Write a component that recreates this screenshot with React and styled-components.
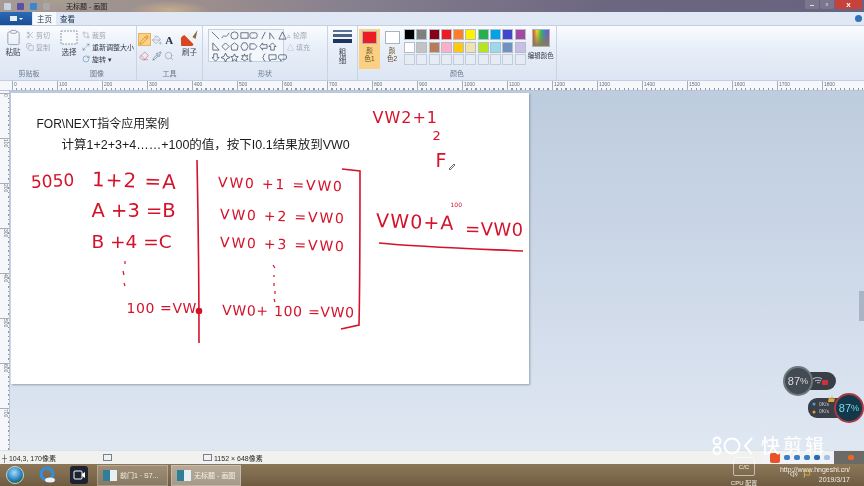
import React from "react";
import styled, { createGlobalStyle } from "styled-components";
import { Clipboard, Scissors, Copy, Maximize2, RotateCw, Pencil, PaintBucket, Eraser, Pipette, Search, Crop, Volume2, Flag } from "lucide-react";

const PALETTE = [
	"#000000", "#7f7f7f", "#880015", "#ed1c24", "#ff7f27", "#fff200", "#22b14c", "#00a2e8", "#3f48cc", "#a349a4",
	"#ffffff", "#c3c3c3", "#b97a57", "#ffaec9", "#ffc90e", "#efe4b0", "#b5e61d", "#99d9ea", "#7092be", "#c8bfe7",
	"none", "none", "none", "none", "none", "none", "none", "none", "none", "none",
];

const RULER_TOP = Array.from({ length: 19 }, (_, i) => i * 100);
const RULER_LEFT = Array.from({ length: 8 }, (_, i) => i * 100);

const SHAPES = [
	<path d="M1 1l8 8" />, <path d="M1 8c2-6 4 2 8-6" />, <circle cx="5" cy="5" r="4" />, <rect x="1" y="2" width="8" height="6" />,
	<rect x="1" y="2" width="8" height="6" rx="2" />, <path d="M3 9L7 1" />, <path d="M2 9V2l5 7" />, <path d="M5 1l4 8H1z" />,
	<path d="M2 1v8h7z" />, <path d="M5 1l4 4-4 4-4-4z" />, <path d="M5 1l4 3-1 5H2L1 4z" />, <path d="M3 1h4l2 4-2 4H3L1 5z" />,
	<path d="M1 2h5l3 3-3 3H1z" />, <path d="M9 3H4V1L1 5l3 4V7h5z" />, <path d="M5 1l4 4H7v4H3V5H1z" />, null,
	<path d="M3 1h4v4h2L5 9 1 5h2z" />, <path d="M5 0l1.500 3.500L10 5 6.500 6.500 5 10 3.500 6.500 0 5l3.500-1.500z" />, <path d="M5 1l1.200 2.800 3 .3-2.300 2 .7 3L5 7.500 2.400 9l.7-3-2.300-2 3-.3z" />, <path d="M5 1l1 2.500 2.500-1-1 2.500 1.500 2-2.500.5L5 9 4 7.500l-2.500-.5 1.500-2-1-2.500 2.500 1z" />,
	<path d="M3 1H1v8h2" />, <path d="M7 1c-3 0-1 4-3 4 2 0 0 4 3 4" />, <path d="M1 2h8v5H4L2 9V7H1z" />, <path d="M2 2h6c2 0 2 5 0 5H5L3 9V7H2C0 7 0 2 2 2z" />,
];

const HAND_LEFT = [
	{ text: "5050", x: 20, y: 81, size: 17, space: 0, tilt: -3 },
	{ text: "1+2 =A", x: 81, y: 76, size: 20, space: 1, tilt: 2 },
	{ text: "A +3 =B", x: 81, y: 108, size: 19.500, space: 0, tilt: 0 },
	{ text: "B +4 =C", x: 81, y: 140, size: 18.500, space: 0, tilt: 0 },
	{ text: "100 =VW", x: 116, y: 208, size: 14, space: 0.6, tilt: 0 },
	{ text: "VW0 +1 =VW0", x: 207, y: 82, size: 14, space: 1.8, tilt: 2 },
	{ text: "VW0 +2 =VW0", x: 209, y: 114, size: 14, space: 1.800, tilt: 2 },
	{ text: "VW0 +3 =VW0", x: 209, y: 142, size: 14, space: 1.800, tilt: 2 },
	{ text: "VW0+ 100 =VW0", x: 211, y: 210, size: 14, space: 0.7, tilt: 1 },
	{ text: "VW2+1", x: 362, y: 17, size: 16, space: 1, tilt: 0 },
	{ text: "2", x: 422, y: 36, size: 13, space: 0, tilt: 0 },
	{ text: "F", x: 425, y: 58, size: 19, space: 0, tilt: 0 },
	{ text: "VW0+A", x: 365, y: 118, size: 19, space: 1.2, tilt: 2 },
	{ text: "=VW0", x: 454, y: 127, size: 18, space: 0.5, tilt: 1 },
	{ text: "100", x: 440, y: 109, size: 6, space: 0, tilt: 0 },
];

const GlobalStyle = createGlobalStyle`
	html, body {
		margin: 0;
		padding: 0;
		width: 864px;
		height: 486px;
		overflow: hidden;
	}
	body {
		font-family: "Liberation Sans", "Noto Sans CJK SC", sans-serif;
	}
`;

const Screen = styled.div`
	position: relative;
	display: flex;
	flex-direction: column;
	width: 864px;
	height: 486px;
	overflow: hidden;
	background: #c9d5e6;
	filter: blur(0.35px);
`;

const TitleBar = styled.div`
	height: 12px;
	display: flex;
	align-items: center;
	padding-left: 4px;
	gap: 6px;
	background:
		radial-gradient(ellipse 40px 9px at 170px 10px, #c6ab8c 0%, rgba(198, 171, 140, 0) 100%),
		radial-gradient(ellipse 30px 9px at 60px 0, #a8a08f 0%, rgba(168, 160, 143, 0) 100%),
		linear-gradient(90deg, #a59a95 0%, #9a8d8c 25%, #87808f 40%, #6d6680 70%, #68637f 100%);
`;

const QuickIcon = styled.span`
	width: 7px;
	height: 7px;
	border-radius: 1px;
	background: ${(p) => p.$color};
`;

const TitleText = styled.span`
	margin-left: 10px;
	font-size: 7px;
	color: #1b1b1b;
`;

const WinButtons = styled.div`
	margin-left: auto;
	margin-right: 2px;
	display: flex;
	gap: 1px;
	height: 9px;
	align-self: flex-start;
`;

const WinButton = styled.span`
	width: ${(p) => (p.$close ? "27px" : "14px")};
	height: 9px;
	display: flex;
	align-items: center;
	justify-content: center;
	color: #fff;
	font-size: 8px;
	font-weight: 700;
	border-radius: 0 0 2px 2px;
	background: ${(p) => (p.$close ? "#c8423c" : "rgba(255,255,255,0.12)")};
`;

const TabRow = styled.div`
	height: 13px;
	display: flex;
	align-items: stretch;
	background: #dfe8f4;
	border-bottom: 1px solid #c5d0df;
`;

const FileTab = styled.div`
	width: 32px;
	display: flex;
	align-items: center;
	justify-content: center;
	gap: 2px;
	background: linear-gradient(#2a6bb5, #1a4f95);
`;

const FileGlyph = styled.span`
	width: 7px;
	height: 5px;
	background: #e8eef8;
`;

const FileArrow = styled.span`
	width: 0;
	height: 0;
	border: 2px solid transparent;
	border-top-color: #fff;
	margin-top: 2px;
`;

const Tab = styled.div`
	width: 23px;
	margin-left: ${(p) => (p.$first ? "1px" : "0")};
	display: flex;
	align-items: center;
	justify-content: center;
	font-size: 7.500px;
	color: #25364f;
	background: ${(p) => (p.$active ? "#f7fafd" : "transparent")};
`;

const HelpDot = styled.span`
	margin-left: auto;
	margin-right: 2px;
	align-self: center;
	width: 7px;
	height: 7px;
	border-radius: 50%;
	background: #2c73b8;
`;

const Ribbon = styled.div`
	height: 55px;
	display: flex;
	background: linear-gradient(#fafcff 0%, #eaf0f9 35%, #dce5f3 100%);
	border-bottom: 1px solid #c3cfdf;
	box-sizing: border-box;
`;

const Group = styled.div`
	width: ${(p) => p.$width}px;
	flex: none;
	display: flex;
	flex-direction: column;
	border-right: ${(p) => (p.$plain ? "none" : "1px solid #c8d3e3")};
	box-sizing: border-box;
`;

const GroupBody = styled.div`
	flex: 1;
	display: flex;
	gap: ${(p) => p.$gap ?? 3}px;
	padding: 3px 0 0 ${(p) => p.$pad ?? 3}px;
	min-height: 0;
`;

const GroupLabel = styled.div`
	height: 11px;
	line-height: 9px;
	text-align: center;
	font-size: 7px;
	color: #6b7a8e;
`;

const BigTool = styled.div`
	width: ${(p) => p.$width || 22}px;
	display: flex;
	flex-direction: column;
	align-items: center;
	gap: 3px;
	font-size: 7.500px;
	line-height: 8px;
	color: #3d4450;
	text-align: center;
`;

const ToolColumn = styled.div`
	display: flex;
	flex-direction: column;
	gap: 3px;
	padding-top: 1px;
`;

const SmallTool = styled.div`
	display: flex;
	align-items: center;
	gap: 2px;
	font-size: 7px;
	height: 9px;
	white-space: nowrap;
	color: ${(p) => (p.$muted ? "#a0a8b4" : "#2f3948")};
`;

const ToolGrid = styled.div`
	display: grid;
	grid-template-columns: repeat(3, 12.500px);
	grid-auto-rows: 13px;
	gap: 3px 0;
	margin-top: 4px;
`;

const ToolCell = styled.div`
	display: flex;
	align-items: center;
	justify-content: center;
	font: 700 11px "Liberation Serif", serif;
	color: #27334a;
	background: ${(p) => (p.$active ? "#fbd27f" : "transparent")};
	border: 1px solid ${(p) => (p.$active ? "#e6b25c" : "transparent")};
	box-sizing: border-box;
`;

const ShapeBox = styled.div`
	width: 76px;
	height: 33px;
	display: grid;
	grid-template-columns: repeat(8, 9px);
	grid-auto-rows: 10px;
	gap: 1px 0.5px;
	padding: 1px 2px;
	box-sizing: border-box;
	background: #f3f6fb;
	border: 1px solid #c4cfdf;
`;

const ShapeIcon = styled.svg`
	width: 9px;
	height: 9px;
	fill: none;
	stroke: #4b5a70;
	stroke-width: 0.9;
`;

const SizeLines = styled.div`
	width: 19px;
	display: flex;
	flex-direction: column;
	gap: 2px;
	margin: 1px auto 3px;
`;

const SizeLine = styled.span`
	height: ${(p) => p.$h}px;
	background: ${(p) => p.$color};
`;

const ColorTool = styled.div`
	width: 21px;
	height: 40px;
	display: flex;
	flex-direction: column;
	align-items: center;
	gap: 3px;
	padding-top: 2px;
	box-sizing: border-box;
	font-size: 6.500px;
	line-height: 8px;
	color: #5e4a24;
	text-align: center;
	background: ${(p) => (p.$active ? "#fbd083" : "transparent")};
`;

const ColorChip = styled.span`
	width: 15px;
	height: 13px;
	flex: none;
	background: ${(p) => p.$color};
	border: 1px solid #aab2bf;
	box-sizing: border-box;
`;

const SwatchGrid = styled.div`
	display: grid;
	grid-template-columns: repeat(10, 11px);
	grid-auto-rows: 11px;
	gap: 1.500px 1.300px;
`;

const Swatch = styled.span`
	background: ${(p) => (p.$color === "none" ? "#e6ecf5" : p.$color)};
	border: 1px solid ${(p) => (p.$color === "none" ? "#c3ccd9" : "#b5bdc9")};
	box-sizing: border-box;
`;

const EditColor = styled.div`
	width: 27px;
	display: flex;
	flex-direction: column;
	align-items: center;
	gap: 3px;
	font-size: 6.500px;
	white-space: nowrap;
	color: #303a49;
`;

const Rainbow = styled.span`
	width: 16px;
	height: 16px;
	border: 1px solid #aab2bf;
	background:
		linear-gradient(transparent, #8a7a55),
		linear-gradient(90deg, #ec4040, #f0e030, #30c050, #3080e0, #a040c0);
`;

const TopRuler = styled.div`
	height: 9px;
	display: flex;
	padding-left: 12px;
	background:
		repeating-linear-gradient(90deg, #8d97a5 0, #8d97a5 1px, transparent 1px, transparent 4.500px) 12px 7px / 100% 2px no-repeat,
		#f5f7fa;
	border-bottom: 1px solid #b9c5d6;
`;

const TopMark = styled.span`
	width: 45px;
	flex: none;
	box-sizing: border-box;
	padding-left: 1px;
	font-size: 5px;
	line-height: 7px;
	color: #666f7c;
	border-left: 1px solid #a4adba;
`;

const Workspace = styled.div`
	position: relative;
	flex: 1;
	display: flex;
	min-height: 0;
	background: linear-gradient(#bdccde 0%, #cdd8e8 50%, #dfe7f2 100%);
`;

const LeftRuler = styled.div`
	width: 10px;
	flex: none;
	display: flex;
	flex-direction: column;
	padding-top: 2px;
	box-sizing: border-box;
	background:
		repeating-linear-gradient(#8d97a5 0, #8d97a5 1px, transparent 1px, transparent 4.500px) 8px 2px / 2px 100% no-repeat,
		#f5f7fa;
	border-right: 1px solid #b9c5d6;
`;

const LeftMark = styled.span`
	height: 45px;
	flex: none;
	box-sizing: border-box;
	writing-mode: vertical-rl;
	font-size: 5px;
	line-height: 7px;
	color: #666f7c;
	border-top: 1px solid #a4adba;
`;

const Stage = styled.div`
	flex: 1;
	padding: 2px 0 0 0.500px;
`;

const ScrollHandle = styled.span`
	position: absolute;
	right: 0;
	top: 200px;
	width: 5px;
	height: 30px;
	background: #a9b4c4;
`;

const Canvas = styled.div`
	position: relative;
	width: 518px;
	height: 291px;
	background: #fff;
	box-shadow: 1px 1px 2px rgba(90, 105, 130, 0.55);
`;

const Heading = styled.div`
	position: absolute;
	left: 26px;
	top: 23px;
	font-size: 12px;
	line-height: 16px;
	color: #1c1c1c;
	white-space: nowrap;
`;

const SubHeading = styled(Heading)`
	left: 51px;
	top: 44px;
	font-size: 12.500px;
`;

const Hand = styled.span`
	position: absolute;
	left: ${(p) => p.$x}px;
	top: ${(p) => p.$y}px;
	font-family: "DejaVu Sans", sans-serif;
	font-size: ${(p) => p.$size}px;
	line-height: 1;
	letter-spacing: ${(p) => p.$space}px;
	color: #d5122a;
	white-space: nowrap;
	transform: rotate(${(p) => p.$tilt}deg);
	transform-origin: left center;
`;

const Ink = styled.svg`
	position: absolute;
	left: 0;
	top: 0;
	width: 518px;
	height: 291px;
	fill: none;
	stroke: #d5122a;
	stroke-width: 1.600;
	pointer-events: none;
`;

const StatusBar = styled.div`
	height: 14px;
	flex: none;
	display: flex;
	align-items: center;
	font-size: 7px;
	color: #2a2a2a;
	background: #f1f1ef;
	border-top: 1px solid #dde1e6;
	box-sizing: border-box;
`;

const StatusCell = styled.div`
	width: ${(p) => p.$width}px;
	flex: none;
	display: flex;
	align-items: center;
	gap: 2px;
	padding-left: 2px;
	box-sizing: border-box;
`;

const StatusGlyph = styled.span`
	width: 7px;
	height: 5px;
	border: 1px solid #75808e;
`;

const TrayStrip = styled.div`
	margin-left: auto;
	display: flex;
	align-items: center;
	gap: 4px;
	height: 100%;
	width: 103px;
	padding-left: 9px;
	box-sizing: border-box;
	background: linear-gradient(90deg, #f2f3f4 0, #eef2f6 71%, #6c6a66 71%, #6c6a66 100%);
`;

const TrayDot = styled.span`
	width: ${(p) => (p.$big ? 10 : 6)}px;
	height: ${(p) => (p.$big ? 10 : 5)}px;
	margin-left: ${(p) => p.$push || 0}px;
	border-radius: 2px;
	background: ${(p) => p.$color};
`;

const Taskbar = styled.div`
	height: 22px;
	flex: none;
	display: flex;
	align-items: center;
	background: linear-gradient(#8c7658, #7e6a4d 50%, #6f5b40);
`;

const StartOrb = styled.span`
	width: 18px;
	height: 18px;
	margin-left: 6px;
	border-radius: 50%;
	background: radial-gradient(circle at 45% 35%, #a6dcf5, #2f88c8 50%, #1c5d39 80%);
	border: 1px solid #c5d3d8;
	box-sizing: border-box;
`;

const PinnedIcon = styled.span`
	width: 18px;
	height: 18px;
	margin-left: 14px;
	display: flex;
	align-items: center;
	justify-content: center;
`;

const TaskButton = styled.div`
	width: ${(p) => p.$width}px;
	height: 21px;
	margin-left: ${(p) => p.$gap}px;
	display: flex;
	align-items: center;
	gap: 3px;
	padding-left: 5px;
	box-sizing: border-box;
	font-size: 7px;
	color: #f5f1ea;
	background: ${(p) => (p.$active ? "rgba(255,255,255,0.38)" : "rgba(255,255,255,0.18)")};
	border: 1px solid rgba(255, 255, 255, 0.25);
`;

const TaskThumb = styled.span`
	width: 14px;
	height: 11px;
	background: linear-gradient(90deg, #2e7f9a 50%, #e8eef2 50%);
`;

const Clock = styled.div`
	margin-left: auto;
	padding-right: 14px;
	text-align: right;
	font-size: 7px;
	line-height: 10px;
	color: #f2eee6;
`;

const ClockIcons = styled.div`
	position: absolute;
	left: 790px;
	top: 470px;
	display: flex;
	gap: 5px;
`;

const DeskIcon = styled.div`
	position: absolute;
	left: 731px;
	top: 457px;
	width: 26px;
	display: flex;
	flex-direction: column;
	align-items: center;
	gap: 2px;
	font-size: 6px;
	white-space: nowrap;
	color: #f4f1ea;
`;

const DeskFrame = styled.span`
	width: 20px;
	height: 17px;
	display: flex;
	align-items: center;
	justify-content: center;
	font-size: 6px;
	border: 1px solid rgba(255, 255, 255, 0.55);
	border-radius: 2px;
`;

const Overlay = styled.div`
	position: absolute;
	left: ${(p) => p.$x}px;
	top: ${(p) => p.$y}px;
`;

const Pill = styled.div`
	width: ${(p) => p.$width}px;
	height: ${(p) => p.$height}px;
	box-sizing: border-box;
	padding-left: ${(p) => p.$pad}px;
	border-radius: 9px;
	background: #3a3f47;
	display: flex;
	align-items: center;
	gap: 3px;
	font-size: 5px;
	line-height: 7px;
	color: #c5ccd5;
`;

const Gauge = styled.div`
	position: absolute;
	left: ${(p) => p.$x}px;
	top: ${(p) => p.$y}px;
	width: 30px;
	height: 30px;
	box-sizing: border-box;
	border-radius: 50%;
	display: flex;
	align-items: center;
	justify-content: center;
	font-size: 11px;
	color: ${(p) => p.$color};
	background: ${(p) => p.$bg};
	border: 2px solid ${(p) => p.$ring};
`;

const Watermark = styled.div`
	position: absolute;
	left: 761px;
	top: 433px;
	font-size: 19px;
	line-height: 24px;
	font-weight: 500;
	letter-spacing: 3px;
	color: #fff;
	opacity: 0.95;
	font-family: "Noto Sans CJK SC", sans-serif;
`;

const LogoMark = styled.svg`
	position: absolute;
	left: 712px;
	top: 436px;
	width: 42px;
	height: 20px;
	fill: none;
	stroke: #fff;
	stroke-width: 2;
`;

const Icon = ({ as: Glyph, size = 11, color = "#8a93a1" }) => <Glyph size={size} color={color} strokeWidth={1.4} />;

const App = () => {
	return (
		<Screen>
			<GlobalStyle />
			<TitleBar>
				<QuickIcon $color="#c6d3df" />
				<QuickIcon $color="#5d4fa3" />
				<QuickIcon $color="#3a88c9" />
				<QuickIcon $color="#a8a8a8" />
				<TitleText>无标题 - 画图</TitleText>
				<WinButtons>
					<WinButton>–</WinButton>
					<WinButton>▫</WinButton>
					<WinButton $close>x</WinButton>
				</WinButtons>
			</TitleBar>

			<TabRow>
				<FileTab>
					<FileGlyph />
					<FileArrow />
				</FileTab>
				<Tab $first $active>主页</Tab>
				<Tab>查看</Tab>
				<HelpDot />
			</TabRow>

			<Ribbon>
				<Group $width={58} $plain>
					<GroupBody>
						<BigTool $width={20}>
							<Icon as={Clipboard} size={17} color="#9aa4b2" />
							粘贴
						</BigTool>
						<ToolColumn>
							<SmallTool $muted><Icon as={Scissors} size={8} />剪切</SmallTool>
							<SmallTool $muted><Icon as={Copy} size={8} />复制</SmallTool>
						</ToolColumn>
					</GroupBody>
					<GroupLabel>剪贴板</GroupLabel>
				</Group>

				<Group $width={79}>
					<GroupBody $pad={1}>
						<BigTool $width={20}>
							<svg width="18" height="17" viewBox="0 0 18 17">
								<rect x="1" y="2" width="16" height="13" fill="#f7f9fc" stroke="#8f9aab" strokeDasharray="2 1" />
							</svg>
							选择
						</BigTool>
						<ToolColumn>
							<SmallTool $muted><Icon as={Crop} size={8} />裁剪</SmallTool>
							<SmallTool><Icon as={Maximize2} size={8} color="#3b6ea8" />重新调整大小</SmallTool>
							<SmallTool><Icon as={RotateCw} size={8} color="#3b6ea8" />旋转 ▾</SmallTool>
						</ToolColumn>
					</GroupBody>
					<GroupLabel>图像</GroupLabel>
				</Group>

				<Group $width={66}>
					<GroupBody $gap={5} $pad={1}>
						<div>
							<ToolGrid>
								<ToolCell $active><Icon as={Pencil} size={10} color="#b96a18" /></ToolCell>
								<ToolCell><Icon as={PaintBucket} size={10} /></ToolCell>
								<ToolCell>A</ToolCell>
								<ToolCell><Icon as={Eraser} size={10} color="#d2555f" /></ToolCell>
								<ToolCell><Icon as={Pipette} size={10} color="#46617f" /></ToolCell>
								<ToolCell><Icon as={Search} size={10} /></ToolCell>
							</ToolGrid>
						</div>
						<BigTool $width={18}>
							<svg width="18" height="17" viewBox="0 0 17 17">
								<path d="M3 6a7 7 0 1 0 9 9z" fill="#d8451f" />
								<path d="M3 6l9 9 3-4-8-8z" fill="#f2f2f2" />
								<path d="M11 8l5-7-2 9z" fill="#8a6a3b" />
							</svg>
							刷子
						</BigTool>
					</GroupBody>
					<GroupLabel>工具</GroupLabel>
				</Group>

				<Group $width={125}>
					<GroupBody $pad={5} $gap={3}>
						<ShapeBox>
							{SHAPES.map((shape, i) => (
								<ShapeIcon key={i} viewBox="0 0 10 10">{shape}</ShapeIcon>
							))}
						</ShapeBox>
						<ToolColumn>
							<SmallTool $muted>▵ 轮廓</SmallTool>
							<SmallTool $muted>△ 填充</SmallTool>
						</ToolColumn>
					</GroupBody>
					<GroupLabel>形状</GroupLabel>
				</Group>

				<Group $width={30}>
					<GroupBody $pad={4}>
						<BigTool $width={21}>
							<SizeLines>
								<SizeLine $h={2} $color="#5d7292" />
								<SizeLine $h={3} $color="#4a6184" />
								<SizeLine $h={4} $color="#1e3560" />
							</SizeLines>
							粗<br />细
						</BigTool>
					</GroupBody>
				</Group>

				<Group $width={199}>
					<GroupBody $pad={1} $gap={1.500}>
						<ColorTool $active>
							<ColorChip $color="#ed1c24" />
							<span>颜<br />色1</span>
						</ColorTool>
						<ColorTool>
							<ColorChip $color="#ffffff" />
							<span>颜<br />色2</span>
						</ColorTool>
						<SwatchGrid>
							{PALETTE.map((color, i) => (
								<Swatch key={i} $color={color} />
							))}
						</SwatchGrid>
						<EditColor>
							<Rainbow />
							编辑颜色
						</EditColor>
					</GroupBody>
					<GroupLabel>颜色</GroupLabel>
				</Group>
			</Ribbon>

			<TopRuler>
				{RULER_TOP.map((mark) => (
					<TopMark key={mark}>{mark}</TopMark>
				))}
			</TopRuler>

			<Workspace>
				<LeftRuler>
					{RULER_LEFT.map((mark) => (
						<LeftMark key={mark}>{mark}</LeftMark>
					))}
				</LeftRuler>
				<Stage>
					<Canvas>
						<Heading>FOR\NEXT指令应用案例</Heading>
						<SubHeading>计算1+2+3+4……+100的值，按下I0.1结果放到VW0</SubHeading>
						{HAND_LEFT.map((item) => (
							<Hand key={item.text} $x={item.x} $y={item.y} $size={item.size} $space={item.space} $tilt={item.tilt}>
								{item.text}
							</Hand>
						))}
						<Ink viewBox="0 0 518 291">
							<path d="M186 67c1 50 2 130 2 183" />
							<circle cx="188" cy="218" r="2.500" fill="#d5122a" />
							<path d="M331 76l18 2c0 50 0 110-1 154l-18 4" />
							<path d="M368 150c40 4 100 6 144 8" />
							<path d="M114 168v3M112 178l1 4M113 190l1 3M262 172l2 3M263 182v2M263 190v3M264 198v3M263 206l1 3" strokeWidth="1.200" />
							<path d="M438 76l5-5 1 1-5 5z" stroke="#6d6d6d" strokeWidth="1" />
						</Ink>
					</Canvas>
				</Stage>
				<ScrollHandle />
			</Workspace>

			<StatusBar>
				<StatusCell $width={101}>┼ 104,3, 170像素</StatusCell>
				<StatusCell $width={100}><StatusGlyph /></StatusCell>
				<StatusCell $width={160}><StatusGlyph />1152 × 648像素</StatusCell>
				<TrayStrip>
					<TrayDot $big $color="#e8532a" />
					<TrayDot $color="#3a7fc4" />
					<TrayDot $color="#3a7fc4" />
					<TrayDot $color="#3a7fc4" />
					<TrayDot $color="#2a6bb0" />
					<TrayDot $color="#9fc4e4" />
					<TrayDot $push={14} $color="#ea6a22" />
				</TrayStrip>
			</StatusBar>

			<Taskbar>
				<StartOrb />
				<PinnedIcon>
					<svg width="18" height="18" viewBox="0 0 18 18">
						<circle cx="9" cy="8" r="6" fill="none" stroke="#2f8fe0" strokeWidth="3" />
						<ellipse cx="12" cy="14" rx="5" ry="2.500" fill="#e8f2fa" />
					</svg>
				</PinnedIcon>
				<PinnedIcon>
					<svg width="18" height="18" viewBox="0 0 18 18">
						<rect width="18" height="18" rx="3" fill="#1d2230" />
						<rect x="4" y="5" width="8" height="8" rx="1" fill="none" stroke="#fff" />
						<path d="M12 8l3-2v6l-3-2z" fill="#fff" />
					</svg>
				</PinnedIcon>
				<TaskButton $width={71} $gap={9}><TaskThumb />前门1 · S7...</TaskButton>
				<TaskButton $width={70} $gap={3} $active><TaskThumb />无标题 - 画图</TaskButton>
				<Clock>
					http://www.hngeshi.cn/
					<br />
					2019/3/17
				</Clock>
			</Taskbar>

			<ClockIcons>
				<Volume2 size={8} color="#f4f1ea" />
				<Flag size={8} color="#f0d060" />
			</ClockIcons>

			<DeskIcon>
				<DeskFrame>C/C</DeskFrame>
				CPU 配置
			</DeskIcon>

			<Overlay $x={784} $y={372}>
				<Pill $width={52} $height={18} $pad={28}>
					<svg width="17" height="9" viewBox="0 0 17 9">
						<path d="M1 2c3-2 6-2 9 0M3 4c2-1 4-1 6 0M5 6c1-.5 2-.5 3 0" fill="none" stroke="#c8ced6" />
						<rect x="10" y="3" width="6" height="5" rx="1" fill="#d0303c" />
					</svg>
				</Pill>
			</Overlay>
			<Gauge $x={783} $y={366} $color="#d8dde3" $bg="#444a52" $ring="#6c7a80">87<small>%</small></Gauge>

			<Overlay $x={808} $y={398}>
				<Pill $width={40} $height={20} $pad={4}>
					<svg width="4" height="14" viewBox="0 0 4 14">
						<circle cx="2" cy="3" r="1.500" fill="#4f9be0" />
						<circle cx="2" cy="11" r="1.500" fill="#e0a030" />
					</svg>
					<span>0K/s<br />0K/s</span>
				</Pill>
			</Overlay>
			<Gauge $x={834} $y={393} $color="#7fd6ea" $bg="#12384a" $ring="#a83a44">87<small>%</small></Gauge>
			<Overlay $x={827} $y={389}>
				<svg width="9" height="9" viewBox="0 0 9 9">
					<path d="M1 8l1-5 2 2 1-4 1 4 2-1-1 4z" fill="#e0a83a" />
				</svg>
			</Overlay>

			<LogoMark viewBox="0 0 42 20">
				<circle cx="5" cy="5" r="3.500" />
				<circle cx="5" cy="14.500" r="3.500" />
				<circle cx="20" cy="10" r="7.500" />
				<path d="M40 2l-7 8 7 8" />
			</LogoMark>
			<Watermark>快剪辑</Watermark>
		</Screen>
	);
};

export default App;
